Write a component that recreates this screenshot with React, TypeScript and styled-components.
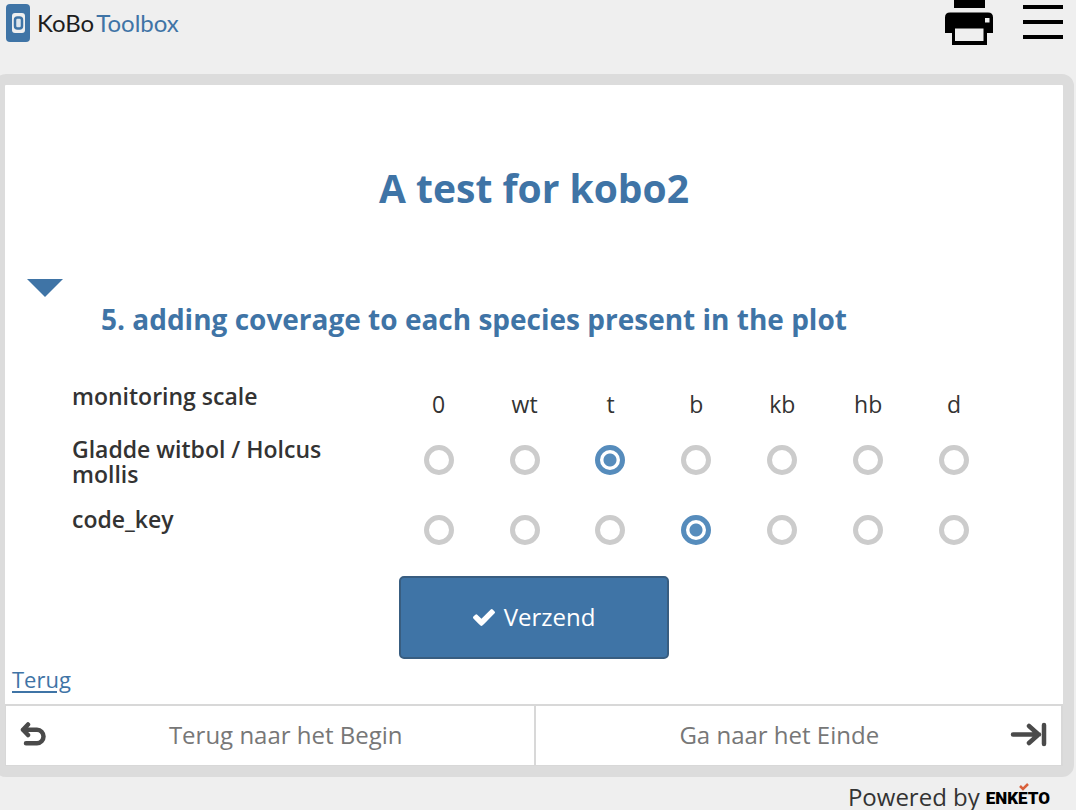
import React, { useState } from "react";
import styled, { createGlobalStyle } from "styled-components";

const blue = "#3f74a6";
const grey = "#dcdcdc";

const GlobalStyle = createGlobalStyle`
  *, *::before, *::after { box-sizing: border-box; }
  body {
    margin: 0;
    background: #efefef;
    color: #333;
    font-family: "Open Sans", "Noto Sans", sans-serif;
    font-size: 24px;
    overflow-x: hidden;
  }
`;

const Header = styled.header`
  display: flex;
  align-items: flex-start;
  justify-content: space-between;
  height: 74px;
  padding: 0 13px 0 6px;
`;

const Brand = styled.a`
  display: flex;
  align-items: center;
  gap: 6px;
  padding-top: 3px;
  color: #1d1d1d;
  line-height: 40px;
  text-decoration: none;
`;

const BrandText = styled.span`
  display: flex;
  gap: 2px;
  font-family: Lato, sans-serif;
  font-size: 24px;
`;

const BrandAccent = styled.span`
  color: ${blue};
`;

const Tools = styled.div`
  display: flex;
  align-items: flex-start;
  gap: 30px;
`;

const IconButton = styled.button`
  display: block;
  padding: 0;
  border: 0;
  background: none;
  color: #000;
  cursor: pointer;

  svg { display: block; }
`;

const Paper = styled.main`
  margin: 0 2px 0 -6px;
  border: 11px solid ${grey};
  border-radius: 12px;
  background: #fff;
`;

const Title = styled.h1`
  margin: 0;
  padding: 79px 0 67px;
  color: ${blue};
  font-size: 39px;
  font-weight: 700;
  line-height: 48px;
  text-align: center;
`;

const Section = styled.section`
  padding: 0 66px 0 22px;
`;

const Toggle = styled(IconButton)`
  color: ${blue};
`;

const SectionTitle = styled.h2`
  margin: 4px 0 46px 74px;
  color: ${blue};
  font-size: 28px;
  font-weight: 700;
  line-height: 36px;
`;

const GridWrap = styled.div`
  padding-left: 45px;
`;

const ScaleTable = styled.table`
  width: 100%;
  table-layout: fixed;
  border-collapse: collapse;
  line-height: 25px;
`;

const Row = styled.tr<{ $head?: boolean }>`
  height: ${(p) => (p.$head ? 53 : 70)}px;
`;

const Label = styled.th`
  width: 35%;
  padding: 1px 50px 0 0;
  font-size: 23px;
  font-weight: 600;
  text-align: left;
  vertical-align: top;
`;

const Option = styled.th`
  padding: 9px 0 0;
  font-size: 23px;
  font-weight: 400;
  text-align: center;
  vertical-align: top;
`;

const Choice = styled.td`
  padding: 9px 0 0;
  text-align: center;
  vertical-align: top;
`;

const Radio = styled.input`
  appearance: none;
  display: block;
  width: 30px;
  height: 30px;
  margin: 0 auto;
  border: 5px solid #ccc;
  border-radius: 50%;
  background: #fff;
  cursor: pointer;

  &:checked {
    border-color: #568cbc;
    background: radial-gradient(circle, #568cbc 6px, #fff 7px);
  }
`;

const Submit = styled.button`
  display: flex;
  align-items: center;
  justify-content: center;
  gap: 9px;
  width: 270px;
  height: 83px;
  margin: 0 auto;
  padding: 0 0 2px;
  border: 2px solid #385d80;
  border-radius: 5px;
  background: ${blue};
  color: #fff;
  font: inherit;
  cursor: pointer;
`;

const BackRow = styled.div`
  padding: 3px 7px 8px;
  line-height: 34px;
`;

const BackLink = styled.a`
  color: ${blue};
  font-size: 22px;
  text-decoration-thickness: 2px;
  text-underline-offset: 3px;
`;

const Pager = styled.nav`
  display: grid;
  grid-template-columns: 1fr 1fr;
  border: solid #d8d8d8;
  border-width: 2px 2px 1px 1px;
`;

const PagerButton = styled.button<{ $end?: boolean }>`
  display: flex;
  flex-direction: ${(p) => (p.$end ? "row-reverse" : "row")};
  align-items: center;
  height: 59px;
  padding: 0 14px 2px;
  border: 0;
  border-left: ${(p) => (p.$end ? "2px solid #d8d8d8" : "0")};
  background: #fff;
  color: #777;
  font: inherit;
  cursor: pointer;

  svg { flex: none; color: #4a4a4a; }
`;

const PagerLabel = styled.span`
  flex: 1;
  text-align: center;
`;

const Footer = styled.footer`
  display: flex;
  justify-content: flex-end;
  gap: 6px;
  padding: 6px 26px 0 0;
  line-height: 28px;
`;

const Enketo = styled.a`
  position: relative;
  color: #000;
  font-family: Roboto, sans-serif;
  font-size: 17px;
  font-weight: 900;
  line-height: 30px;
  height: 28px;
  text-decoration: none;
`;

const EnketoTick = styled.svg`
  position: absolute;
  top: 0;
  left: 33px;
`;

const KoboMark = () => (
  <svg width="25" height="38" viewBox="0 0 25 38" aria-hidden="true">
    <rect width="24" height="38" rx="4" fill={blue} />
    <rect x="6" y="9" width="13" height="20" rx="3" fill="#efefef" />
    <rect x="9" y="13.500" width="7" height="11" rx="2.500" fill="#dde5ec" stroke={blue} strokeWidth="2.500" />
  </svg>
);

const PrinterIcon = () => (
  <svg width="48" height="45" viewBox="0 0 48 45" aria-hidden="true">
    <path fill="currentColor" d="M9 0h31v8H9z" />
    <path
      fill="currentColor"
      fillRule="evenodd"
      d="M5 12.500h38q5 0 5 5V33h-6v12H7V33H0V17.500q0-5 5-5zM40 18v4.500h4.500V18zM10 28.500V41h28.500V28.500z"
    />
  </svg>
);

const MenuIcon = () => (
  <svg width="40" height="39" viewBox="0 0 40 39" aria-hidden="true">
    <path fill="currentColor" d="M0 5h40v4H0zM0 20h40v4H0zM0 35h40v4H0z" />
  </svg>
);

const ReturnIcon = () => (
  <svg width="32" height="28" viewBox="1 0 32 28" fill="none" stroke="currentColor" strokeWidth="4.500" strokeLinecap="round" strokeLinejoin="round" aria-hidden="true">
    <path d="M9 3.500 4 8.700l5 5.300M4 8.700h14a6.500 6.800 0 0 1 0 13.600H7" />
  </svg>
);

const EndIcon = () => (
  <svg width="38" height="26" viewBox="0 0 38 26" fill="none" stroke="currentColor" strokeWidth="4.500" strokeLinecap="round" strokeLinejoin="round" aria-hidden="true">
    <path d="M4 12.500h26M20 4l9.500 8.500L20 21M35 3v19" />
  </svg>
);

const CheckIcon = () => (
  <svg width="22" height="19" viewBox="121 187 1550 1335" aria-hidden="true">
    <path
      fill="currentColor"
      d="M1671 566q0 40-28 68l-724 724-136 136q-28 28-68 28t-68-28l-136-136-362-362q-28-28-28-68t28-68l136-136q28-28 68-28t68 28l294 295 656-657q28-28 68-28t68 28l136 136q28 28 28 68z"
    />
  </svg>
);

const options = ["0", "wt", "t", "b", "kb", "hb", "d"];
const species = [
  { id: "holcus", label: "Gladde witbol / Holcus mollis", initial: "t" },
  { id: "code_key", label: "code_key", initial: "b" },
];

export default function App() {
  const [values, setValues] = useState<Record<string, string>>(
    Object.fromEntries(species.map((s) => [s.id, s.initial]))
  );

  return (
    <>
      <GlobalStyle />
      <Header>
        <Brand href="#">
          <KoboMark />
          <BrandText>
            <span>KoBo</span>
            <BrandAccent>Toolbox</BrandAccent>
          </BrandText>
        </Brand>
        <Tools>
          <IconButton type="button" aria-label="Print">
            <PrinterIcon />
          </IconButton>
          <IconButton type="button" aria-label="Menu">
            <MenuIcon />
          </IconButton>
        </Tools>
      </Header>

      <Paper>
        <Title>A test for kobo2</Title>
        <Section>
          <Toggle type="button" aria-label="Toggle section">
            <svg width="36" height="18" viewBox="0 0 36 18" aria-hidden="true">
              <path fill="currentColor" d="M0 0h36L18 18z" />
            </svg>
          </Toggle>
          <SectionTitle>5. adding coverage to each species present in the plot</SectionTitle>
          <GridWrap>
            <ScaleTable>
              <thead>
                <Row $head>
                  <Label scope="col">monitoring scale</Label>
                  {options.map((o) => (
                    <Option key={o} scope="col">{o}</Option>
                  ))}
                </Row>
              </thead>
              <tbody>
                {species.map((s) => (
                  <Row key={s.id}>
                    <Label scope="row">{s.label}</Label>
                    {options.map((o) => (
                      <Choice key={o}>
                        <Radio
                          type="radio"
                          name={s.id}
                          value={o}
                          aria-label={`${s.label}: ${o}`}
                          checked={values[s.id] === o}
                          onChange={() => setValues({ ...values, [s.id]: o })}
                        />
                      </Choice>
                    ))}
                  </Row>
                ))}
              </tbody>
            </ScaleTable>
          </GridWrap>
        </Section>
        <Submit type="button">
          <CheckIcon />
          Verzend
        </Submit>
        <BackRow>
          <BackLink href="#">Terug</BackLink>
        </BackRow>
        <Pager>
          <PagerButton type="button">
            <ReturnIcon />
            <PagerLabel>Terug naar het Begin</PagerLabel>
          </PagerButton>
          <PagerButton type="button" $end>
            <EndIcon />
            <PagerLabel>Ga naar het Einde</PagerLabel>
          </PagerButton>
        </Pager>
      </Paper>

      <Footer>
        <span>Powered by</span>
        <Enketo href="#">
          ENKETO
          <EnketoTick width="10" height="8" viewBox="0 0 10 8" fill="none" stroke="#d9603b" strokeWidth="2.500" aria-hidden="true">
            <path d="M1 3l3 3 5-5" />
          </EnketoTick>
        </Enketo>
      </Footer>
    </>
  );
}
